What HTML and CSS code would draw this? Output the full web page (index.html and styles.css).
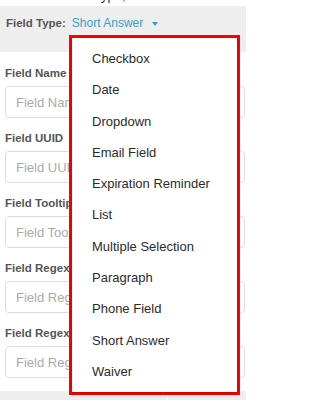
FILE: index.html
```html
<!DOCTYPE html>
<html lang="en">
<head>
  <meta charset="UTF-8">
  <meta name="viewport" content="width=device-width, initial-scale=1.0">
  <title>Field Settings</title>
  <link rel="stylesheet" href="styles.css">
</head>
<body>
  <div class="panel">
    <!-- tail of the text above, scrolled out of view -->
    <div class="top-note"><p>Pick the field type, then enter its name and settings.</p></div>

    <!-- Field type selector -->
    <div class="type-bar">
      <span class="type-label">Field Type:</span>
      <span class="type-value">Short Answer</span>
      <span class="caret"></span>

      <div class="type-menu">
        <ul>
          <li>Checkbox</li>
          <li>Date</li>
          <li>Dropdown</li>
          <li>Email Field</li>
          <li>Expiration Reminder</li>
          <li>List</li>
          <li>Multiple Selection</li>
          <li>Paragraph</li>
          <li>Phone Field</li>
          <li>Short Answer</li>
          <li>Waiver</li>
        </ul>
      </div>
    </div>

    <!-- Field settings -->
    <div class="form">
      <div class="field">
        <label>Field Name</label>
        <input type="text" placeholder="Field Name">
      </div>
      <div class="field">
        <label>Field UUID</label>
        <input type="text" placeholder="Field UUID">
      </div>
      <div class="field">
        <label>Field Tooltip</label>
        <input type="text" placeholder="Field Tooltip">
      </div>
      <div class="field">
        <label>Field Regex</label>
        <input type="text" placeholder="Field Regex">
      </div>
      <div class="field">
        <label>Field Regex Error</label>
        <input type="text" placeholder="Field Regex Error">
      </div>
    </div>

    <div class="panel-footer">
      <div class="footer-cell"></div>
      <div class="footer-cell"></div>
    </div>
  </div>
</body>
</html>
```

FILE: styles.css
```css
body {
  font-family: "Liberation Sans", Arial, sans-serif;
  margin: 0;
  padding: 0;
  background-color: #ffffff;
  color: #333333;
}
.panel {
  width: 246px;
}
.top-note {
  height: 6px;
  overflow: hidden;
}
.top-note p {
  margin: -12px 0 0 20px;
  font-size: 13px;
  line-height: 16px;
  color: #333333;
  white-space: nowrap;
}
.type-bar {
  position: relative;
  display: flex;
  height: 46px;
  padding: 10px 6px 0;
  box-sizing: border-box;
  align-items: flex-start;
  background-color: #eeeeee;
  line-height: 14px;
}
.type-label {
  font-size: 11.5px;
  font-weight: bold;
  color: #555555;
}
.type-value {
  margin-left: 6px;
  font-size: 12px;
  color: #3a9fc6;
}
.caret {
  width: 0;
  height: 0;
  margin: 6px 0 0 9px;
  border-left: 3px solid transparent;
  border-right: 3px solid transparent;
  border-top: 4px solid #3a9fc6;
}
.type-menu {
  position: absolute;
  left: 69px;
  top: 29px;
  width: 171px;
  height: 360px;
  box-sizing: border-box;
  border: 3px solid #ff0000;
  background: #ffffff;
  z-index: 10;
}
.type-menu ul {
  list-style: none;
  margin: 0;
  padding: 5px 0 0;
  height: 100%;
  box-sizing: border-box;
  box-shadow: 0 1px 3px rgba(0, 0, 0, 0.25);
}
.type-menu li {
  height: 31.3px;
  line-height: 31.3px;
  padding-left: 20px;
  font-size: 13px;
  color: #2b2b2b;
}
.form {
  padding: 14px 1px 0 5px;
}
.field {
  margin-bottom: 13px;
}
.field label {
  display: block;
  margin-bottom: 6px;
  font-size: 11.5px;
  line-height: 14px;
  font-weight: bold;
  color: #555555;
  white-space: nowrap;
}
.field input {
  display: block;
  width: 100%;
  height: 32px;
  box-sizing: border-box;
  padding: 0 10px;
  border: 1px solid #dddddd;
  border-radius: 4px;
  font-family: inherit;
  font-size: 13px;
  color: #333333;
}
.field input::placeholder {
  color: #aaaaaa;
}
.panel-footer {
  display: flex;
  height: 9px;
  margin-top: 4px;
  background-color: #eeeeee;
}
.footer-cell {
  flex: 0 0 167px;
}
.footer-cell + .footer-cell {
  flex: 1;
  border-left: 1px solid #f6f6f6;
}
```
